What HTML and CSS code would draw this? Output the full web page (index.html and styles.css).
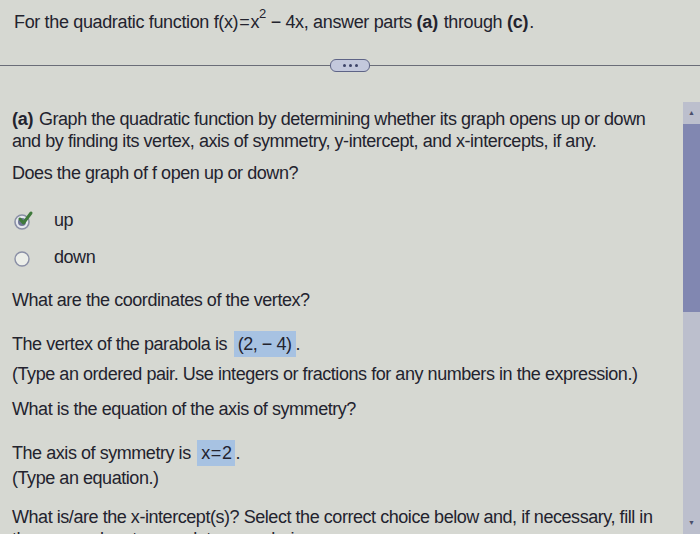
FILE: index.html
```html
<!DOCTYPE html>
<html lang="en">
<head>
    <meta charset="UTF-8">
    <title>Quadratic function</title>
    <link rel="stylesheet" href="styles.css">
</head>
<body>
    <div class="header">
        For the quadratic function f(x)<span class="eq">=</span>x<sup>2</sup> <span class="minus">&minus;</span> 4x, answer parts <b>(a)</b> through <b>(c)</b>.
    </div>
    <div class="divider">
        <div class="line"></div>
        <div class="more"><span></span><span></span><span></span></div>
        <div class="line"></div>
    </div>
    <div class="main">
        <div class="content">
            <p class="intro"><b>(a)</b> Graph the quadratic function by determining whether its graph opens up or down and by finding its vertex, axis of symmetry, y-intercept, and x-intercepts, if any.</p>
            <p class="q">Does the graph of f open up or down?</p>
            <div class="choices">
                <div class="choice">
                    <svg class="radio" width="26" height="22" viewBox="0 0 26 22">
                        <circle cx="10" cy="12" r="7" fill="#e6e8ee" stroke="#8a8fa6" stroke-width="1.6"/>
                        <circle cx="10" cy="12" r="4" fill="#6f7796"/>
                        <path d="M8 9 L11.5 13 L19 3" fill="none" stroke="#3f7a3c" stroke-width="3" stroke-linecap="round" stroke-linejoin="round"/>
                    </svg>
                    <span>up</span>
                </div>
                <div class="choice">
                    <svg class="radio" width="26" height="22" viewBox="0 0 26 22">
                        <circle cx="10" cy="12" r="7" fill="#eceee9" stroke="#8a8fa6" stroke-width="1.4"/>
                    </svg>
                    <span>down</span>
                </div>
            </div>
            <p class="q">What are the coordinates of the vertex?</p>
            <p class="ans">The vertex of the parabola is <span class="box">(2, &minus; 4)</span>.</p>
            <p class="hint">(Type an ordered pair. Use integers or fractions for any numbers in the expression.)</p>
            <p class="q2">What is the equation of the axis of symmetry?</p>
            <p class="ans">The axis of symmetry is <span class="box">x<span class="eq">=</span>2</span>.</p>
            <p class="hint short">(Type an equation.)</p>
            <p class="q2 last">What is/are the x-intercept(s)? Select the correct choice below and, if necessary, fill in the answer box to complete your choice.</p>
        </div>
        <div class="scrollbar">
            <div class="arrow up">&#9650;</div>
            <div class="track"><div class="thumb"></div></div>
            <div class="arrow down">&#9660;</div>
        </div>
    </div>
</body>
</html>
```

FILE: styles.css
```css
body {
    margin: 0;
    background: #d6d8d2;
    color: #23232e;
    font-family: "Liberation Sans", Arial, sans-serif;
    font-size: 18px;
    letter-spacing: -0.45px;
    height: 534px;
    overflow: hidden;
}
b {
    letter-spacing: -0.2px;
    margin-right: 1px;
}
.header {
    padding: 9px 14px 0;
    height: 47px;
    letter-spacing: -0.35px;
}
.header sup {
    font-size: 13px;
    position: relative;
    top: -3px;
}
.eq {
    margin: 0 1px;
}
.divider {
    display: flex;
    align-items: center;
    height: 14px;
    margin-top: 2px;
}
.line {
    flex: 1;
    height: 1px;
    background: #6a6d78;
}
.more {
    width: 38px;
    height: 11px;
    border: 1px solid #5e6486;
    border-radius: 6px;
    background: #c3c8dc;
    display: flex;
    justify-content: center;
    align-items: center;
    gap: 3px;
}
.more span {
    width: 3px;
    height: 3px;
    border-radius: 50%;
    background: #3d4468;
}
.main {
    display: flex;
    margin-top: 30px;
    height: 432px;
}
.content {
    flex: 1;
    padding: 0 20px 0 12px;
}
p {
    margin: 0;
    line-height: 22px;
}
.intro {
    margin-top: 6px;
}
.q {
    margin-top: 10px;
}
.choices {
    margin: 18px 0 13px 0;
}
.choice {
    display: flex;
    align-items: center;
    gap: 16px;
    height: 37px;
}
.ans {
    margin-top: 20px;
}
.ans .box {
    display: inline-block;
    background: #a7c2e2;
    padding: 2px 4px;
    line-height: 22px;
    margin-left: 2px;
}
.hint {
    margin-top: 6px;
}
.hint.short {
    margin-top: 1px;
}
.q2 {
    margin-top: 13px;
}
.q2.last {
    margin-top: 17px;
}
.scrollbar {
    width: 17px;
    display: flex;
    flex-direction: column;
    background: #bcbfcd;
}
.arrow {
    height: 22px;
    font-size: 7px;
    letter-spacing: 0;
    color: #4a4e6a;
    text-align: center;
    line-height: 22px;
}
.track {
    flex: 1;
}
.thumb {
    height: 188px;
    background: #8187b1;
}
```
